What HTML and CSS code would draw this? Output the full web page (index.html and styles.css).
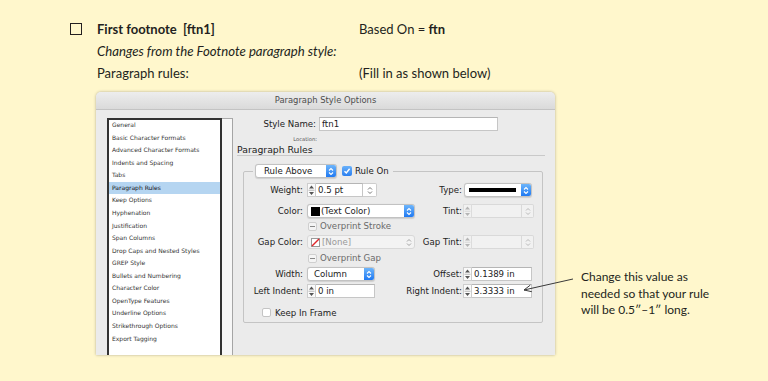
FILE: index.html
```html
<!DOCTYPE html>
<html>
<head>
<meta charset="utf-8">
<link rel="stylesheet" href="styles.css">
</head>
<body>
<div class="page">
  <div class="head">
    <span class="cb"></span><span class="b">First footnote&nbsp; [ftn1]</span><span>Based On = <b>ftn</b></span>
    <span></span><span class="i">Changes from the Footnote paragraph style:</span><span></span>
    <span></span><span>Paragraph rules:</span><span>(Fill in as shown below)</span>
  </div>
  <div class="main">
    <div class="dialog">
      <div class="titlebar">Paragraph Style Options</div>
      <div class="dbody">
        <div class="listbox">
          <ul class="list">
            <li>General</li>
            <li>Basic Character Formats</li>
            <li>Advanced Character Formats</li>
            <li>Indents and Spacing</li>
            <li>Tabs</li>
            <li class="sel">Paragraph Rules</li>
            <li>Keep Options</li>
            <li>Hyphenation</li>
            <li>Justification</li>
            <li>Span Columns</li>
            <li>Drop Caps and Nested Styles</li>
            <li>GREP Style</li>
            <li>Bullets and Numbering</li>
            <li>Character Color</li>
            <li>OpenType Features</li>
            <li>Underline Options</li>
            <li>Strikethrough Options</li>
            <li>Export Tagging</li>
          </ul>
          <div class="gutter"></div>
        </div>
        <div class="pane">
          <div class="r-name"><span class="nlab">Style Name:</span><span class="field name-field">ftn1</span></div>
          <div class="r-loc"><span class="llab">Location:</span></div>
          <div class="sec-head">Paragraph Rules</div>
          <div class="group">
            <div class="legend">
              <span class="pop w-rule"><span class="txt">Rule Above</span><span class="blue"><svg width="6" height="9" viewBox="0 0 6 9"><path d="M1 3.5 L3 1.5 L5 3.5 M1 5.5 L3 7.5 L5 5.5" fill="none" stroke="#fff" stroke-width="1.1"/></svg></span></span>
              <span class="chk on"><svg width="8" height="8" viewBox="0 0 8 8"><path d="M1.5 4.2 L3.3 6 L6.6 1.8" fill="none" stroke="#fff" stroke-width="1.4"/></svg></span>
              <span class="ltxt">Rule On</span>
            </div>

            <div class="row r-weight">
              <span class="lab1">Weight:</span>
              <span class="c2">
                <span class="spin"><svg width="7" height="12" viewBox="0 0 7 12"><path d="M3.5 1.5 L6 4.5 H1 Z M1 8 H6 L3.5 11 Z" fill="#555"/><path d="M0.5 6.25 H6.5" stroke="#888" stroke-width="0.6"/></svg></span>
                <span class="field w-weight">0.5 pt</span>
                <span class="cbtn"><svg width="6" height="9" viewBox="0 0 6 9"><path d="M1 3.5 L3 1.5 L5 3.5 M1 5.5 L3 7.5 L5 5.5" fill="none" stroke="#777" stroke-width="1"/></svg></span>
              </span>
              <span class="lab2">Type:</span>
              <span class="pop w-type"><span class="txt"><span class="stroke-line"></span></span><span class="blue"><svg width="6" height="9" viewBox="0 0 6 9"><path d="M1 3.5 L3 1.5 L5 3.5 M1 5.5 L3 7.5 L5 5.5" fill="none" stroke="#fff" stroke-width="1.1"/></svg></span></span>
            </div>

            <div class="row r-color">
              <span class="lab1">Color:</span>
              <span class="pop w-color"><span class="txt"><span class="sw-black"></span>(Text Color)</span><span class="blue"><svg width="6" height="9" viewBox="0 0 6 9"><path d="M1 3.5 L3 1.5 L5 3.5 M1 5.5 L3 7.5 L5 5.5" fill="none" stroke="#fff" stroke-width="1.1"/></svg></span></span>
              <span class="lab2">Tint:</span>
              <span class="c4">
                <span class="spin dis"><svg width="7" height="12" viewBox="0 0 7 12"><path d="M3.5 1.5 L6 4.5 H1 Z M1 8 H6 L3.5 11 Z" fill="#b5b5b5"/><path d="M0.5 6.25 H6.5" stroke="#c8c8c8" stroke-width="0.6"/></svg></span>
                <span class="field dis w-tint"></span>
                <span class="cbtn dis"><svg width="6" height="9" viewBox="0 0 6 9"><path d="M1 3.5 L3 1.5 L5 3.5 M1 5.5 L3 7.5 L5 5.5" fill="none" stroke="#b8b8b8" stroke-width="1"/></svg></span>
              </span>
            </div>

            <div class="row r-os">
              <span class="chk mixed"><span class="dash"></span></span>
              <span class="dtxt">Overprint Stroke</span>
            </div>

            <div class="row r-gap">
              <span class="lab1">Gap Color:</span>
              <span class="pop dis w-color"><span class="txt"><span class="sw-none"><svg width="9" height="9" viewBox="0 0 9 9"><rect x="0.5" y="0.5" width="8" height="8" fill="#fff" stroke="#999"/><path d="M1 8 L8 1" stroke="#e0262b" stroke-width="1.4"/></svg></span>[None]</span><span class="gchev"><svg width="6" height="9" viewBox="0 0 6 9"><path d="M1 3.5 L3 1.5 L5 3.5 M1 5.5 L3 7.5 L5 5.5" fill="none" stroke="#a0a0a0" stroke-width="1"/></svg></span></span>
              <span class="lab2">Gap Tint:</span>
              <span class="c4">
                <span class="spin dis"><svg width="7" height="12" viewBox="0 0 7 12"><path d="M3.5 1.5 L6 4.5 H1 Z M1 8 H6 L3.5 11 Z" fill="#b5b5b5"/><path d="M0.5 6.25 H6.5" stroke="#c8c8c8" stroke-width="0.6"/></svg></span>
                <span class="field dis w-tint"></span>
                <span class="cbtn dis"><svg width="6" height="9" viewBox="0 0 6 9"><path d="M1 3.5 L3 1.5 L5 3.5 M1 5.5 L3 7.5 L5 5.5" fill="none" stroke="#b8b8b8" stroke-width="1"/></svg></span>
              </span>
            </div>

            <div class="row r-og">
              <span class="chk mixed"><span class="dash"></span></span>
              <span class="dtxt">Overprint Gap</span>
            </div>

            <div class="row r-width">
              <span class="lab1">Width:</span>
              <span class="c2"><span class="pop w-width"><span class="txt">Column</span><span class="blue"><svg width="6" height="9" viewBox="0 0 6 9"><path d="M1 3.5 L3 1.5 L5 3.5 M1 5.5 L3 7.5 L5 5.5" fill="none" stroke="#fff" stroke-width="1.1"/></svg></span></span></span>
              <span class="lab2">Offset:</span>
              <span class="c4">
                <span class="spin"><svg width="7" height="12" viewBox="0 0 7 12"><path d="M3.5 1.5 L6 4.5 H1 Z M1 8 H6 L3.5 11 Z" fill="#555"/><path d="M0.5 6.25 H6.5" stroke="#888" stroke-width="0.6"/></svg></span>
                <span class="field w-off">0.1389 in</span>
              </span>
            </div>

            <div class="row r-li">
              <span class="lab1">Left Indent:</span>
              <span class="c2n">
                <span class="spin"><svg width="7" height="12" viewBox="0 0 7 12"><path d="M3.5 1.5 L6 4.5 H1 Z M1 8 H6 L3.5 11 Z" fill="#555"/><path d="M0.5 6.25 H6.5" stroke="#888" stroke-width="0.6"/></svg></span>
                <span class="field w-li">0 in</span>
              </span>
              <span class="lab2 wide">Right Indent:</span>
              <span class="c4">
                <span class="spin"><svg width="7" height="12" viewBox="0 0 7 12"><path d="M3.5 1.5 L6 4.5 H1 Z M1 8 H6 L3.5 11 Z" fill="#555"/><path d="M0.5 6.25 H6.5" stroke="#888" stroke-width="0.6"/></svg></span>
                <span class="field w-off">3.3333 in</span>
              </span>
            </div>

            <div class="row r-keep">
              <span class="chk plain"></span>
              <span class="ktxt">Keep In Frame</span>
            </div>
          </div>
        </div>
      </div>
    </div>
    <div class="note">Change this value as<br>needed so that your rule<br>will be 0.5″–1″ long.</div>
  </div>
  <svg class="arrow" width="768" height="381" viewBox="0 0 768 381">
    <path d="M573 279 L524 290 M531.8 291.7 L524 290 L530.3 285.1" fill="none" stroke="#3a3a3a" stroke-width="1"/>
  </svg>
</div>
</body>
</html>
```

FILE: styles.css
```css
body {
  margin: 0;
  background: #fff7cc;
}
.page {
  width: 768px;
  height: 381px;
  position: relative;
  overflow: hidden;
  font-family: Lato, "Open Sans", sans-serif;
  color: #231f20;
}
.head {
  display: grid;
  grid-template-columns: 27px 262px auto;
  grid-auto-rows: 22px;
  align-items: center;
  padding: 18px 0 0 70px;
  font-size: 13px;
}
.head .b { font-weight: bold; }
.head .i { font-style: italic; font-size: 13.2px; }
.cb {
  width: 12px;
  height: 12px;
  box-sizing: border-box;
  border: 1.3px solid #231f20;
}
.main {
  display: flex;
  margin-top: 8px;
}
.dialog {
  flex: none;
  margin-left: 96px;
  width: 459px;
  height: 263px;
  background: #ebebeb;
  border-radius: 5px 5px 0 0;
  box-shadow: 0 0 3px rgba(0,0,0,0.3);
  overflow: hidden;
  display: flex;
  flex-direction: column;
  font-family: "DejaVu Sans", sans-serif;
  font-size: 8.6px;
  color: #222;
}
.titlebar {
  flex: none;
  height: 17px;
  line-height: 17px;
  border-bottom: 1px solid #c3c3c3;
  background: linear-gradient(#ededed, #dadada);
  text-align: center;
  font-size: 8.4px;
  color: #4d4d4d;
}
.dbody {
  flex: 1;
  display: flex;
  padding: 7px 0 0 11px;
  min-height: 0;
}
.listbox {
  flex: none;
  margin-top: 1px;
  width: 126px;
  display: flex;
}
.list {
  margin: 0;
  padding: 0;
  list-style: none;
  width: 115px;
  box-sizing: border-box;
  border: 2px solid #333;
  border-bottom: none;
  background: #fff;
  font-size: 6px;
  color: #333;
}
.list li {
  height: 12.57px;
  line-height: 12.57px;
  padding-left: 3px;
  white-space: nowrap;
}
.list li:first-child { margin-top: -1px; }
.list .sel { background: #b5d5f1; color: #111; }
.gutter {
  flex: 1;
  border-top: 1px solid #aaa;
  border-right: 1px solid #a5a5a5;
  background: #f7f7f7;
}
.pane {
  margin-left: 4px;
  width: 308px;
}
.r-name {
  display: flex;
  align-items: center;
  height: 14px;
}
.nlab {
  width: 82px;
  padding-right: 3px;
  box-sizing: border-box;
  text-align: right;
}
.field {
  display: inline-block;
  height: 14px;
  box-sizing: border-box;
  border: 1px solid #c6c6c6;
  border-top-color: #b5b5b5;
  background: #fff;
  padding-left: 2px;
  line-height: 12px;
  white-space: nowrap;
  vertical-align: top;
}
.field.dis {
  background: #f1f1f1;
  border-color: #d9d9d9;
}
.name-field { width: 179px; }
.r-loc {
  margin-top: 3px;
  height: 10px;
  display: flex;
  align-items: center;
}
.llab {
  width: 80px;
  text-align: right;
  font-size: 5.2px;
  color: #555;
}
.sec-head {
  height: 11px;
  line-height: 11px;
  border-bottom: 1px solid #c9c9c9;
  font-size: 9.3px;
  color: #222;
}
.group {
  margin: 15px 0 0 6px;
  width: 300px;
  box-sizing: border-box;
  border: 1px solid #c4c4c4;
  border-radius: 2px;
}
.legend {
  display: flex;
  width: max-content;
  align-items: center;
  height: 14px;
  margin: -8px 0 0 9px;
  padding: 0 4px 0 2px;
  background: #ebebeb;
}
.pop {
  display: inline-flex;
  height: 14px;
  box-sizing: border-box;
  border: 1px solid #c2c2c2;
  border-radius: 3px;
  background: #fff;
  box-shadow: 0 0.5px 1px rgba(0,0,0,0.12);
  vertical-align: top;
  overflow: hidden;
}
.pop .txt {
  flex: 1;
  display: flex;
  align-items: center;
  padding-left: 3px;
  white-space: nowrap;
  line-height: 12px;
}
.pop .blue {
  width: 10px;
  display: flex;
  align-items: center;
  justify-content: center;
  background: linear-gradient(#6db5fb, #1f79f2);
}
.pop.dis {
  background: #f3f3f3;
  border-color: #d8d8d8;
  box-shadow: none;
  color: #9a9a9a;
}
.pop .gchev {
  width: 11px;
  display: flex;
  align-items: center;
  justify-content: center;
}
.w-rule { width: 82px; }
.w-rule .txt { padding-left: 8px; }
.w-type { width: 68px; }
.w-color { width: 108px; }
.w-width { width: 68px; }
.w-width .txt { padding-left: 6px; }
.stroke-line {
  display: block;
  width: 47px;
  height: 4px;
  margin-left: 1px;
  background: #000;
}
.sw-black {
  width: 9px;
  height: 9px;
  background: #000;
  margin-right: 1px;
}
.sw-none {
  display: flex;
  width: 9px;
  height: 9px;
  margin-right: 2px;
}
.chk {
  display: inline-flex;
  align-items: center;
  justify-content: center;
  width: 10px;
  height: 10px;
  box-sizing: border-box;
  border-radius: 2px;
}
.chk.on {
  margin-left: 5px;
  background: linear-gradient(#69b1fa, #2a7ff0);
}
.ltxt { margin-left: 3px; }
.row {
  display: flex;
  align-items: center;
}
.lab1 {
  width: 63px;
  padding-right: 4px;
  box-sizing: border-box;
  text-align: right;
  white-space: nowrap;
  flex: none;
}
.lab2 {
  width: 49px;
  padding-right: 2px;
  box-sizing: border-box;
  text-align: right;
  white-space: nowrap;
  flex: none;
}
.lab2.wide { width: 89px; }
.c2 {
  width: 108px;
  display: flex;
  flex: none;
}
.c2n {
  width: 68px;
  display: flex;
  flex: none;
}
.c4 {
  display: flex;
  flex: none;
  margin-left: -1px;
}
.spin {
  display: inline-flex;
  align-items: center;
  justify-content: center;
  width: 9px;
  height: 14px;
  box-sizing: border-box;
  border: 1px solid #cdcdcd;
  background: #fafafa;
  flex: none;
}
.spin.dis { border-color: #dcdcdc; background: #f1f1f1; }
.cbtn {
  display: inline-flex;
  align-items: center;
  justify-content: center;
  width: 14px;
  height: 14px;
  box-sizing: border-box;
  border: 1px solid #cdcdcd;
  border-left: none;
  background: #fff;
  border-radius: 0 2px 2px 0;
}
.cbtn.dis { width: 12px; background: #f1f1f1; border-color: #d9d9d9; }
.w-weight { width: 47px; border-left: none; }
.w-tint { width: 50px; border-left: none; }
.w-off { width: 60px; border-left: none; }
.w-li { width: 60px; border-left: none; }
.r-weight { height: 24px; }
.r-color { height: 18px; }
.r-os { height: 12px; }
.r-gap { height: 20px; }
.r-og { height: 12px; }
.r-width { height: 20px; }
.r-li { height: 14px; }
.r-keep { height: 19px; margin-top: 5px; }
.chk.mixed {
  margin-left: 64px;
  width: 9px;
  height: 9px;
  border: 1px solid #cfcfcf;
  background: #f4f4f4;
}
.chk.mixed .dash {
  width: 5px;
  height: 1px;
  background: #888;
}
.dtxt {
  margin-left: 3px;
  color: #6a6a6a;
}
.chk.plain {
  margin-left: 18px;
  width: 9px;
  height: 9px;
  border: 1px solid #c4c4c4;
  background: #fff;
}
.ktxt { margin-left: 4px; }
.note {
  margin-left: 26px;
  padding-top: 177px;
  font-size: 12px;
  line-height: 16.5px;
  white-space: nowrap;
  color: #231f20;
}
.arrow {
  position: absolute;
  left: 0;
  top: 0;
  pointer-events: none;
}
```
